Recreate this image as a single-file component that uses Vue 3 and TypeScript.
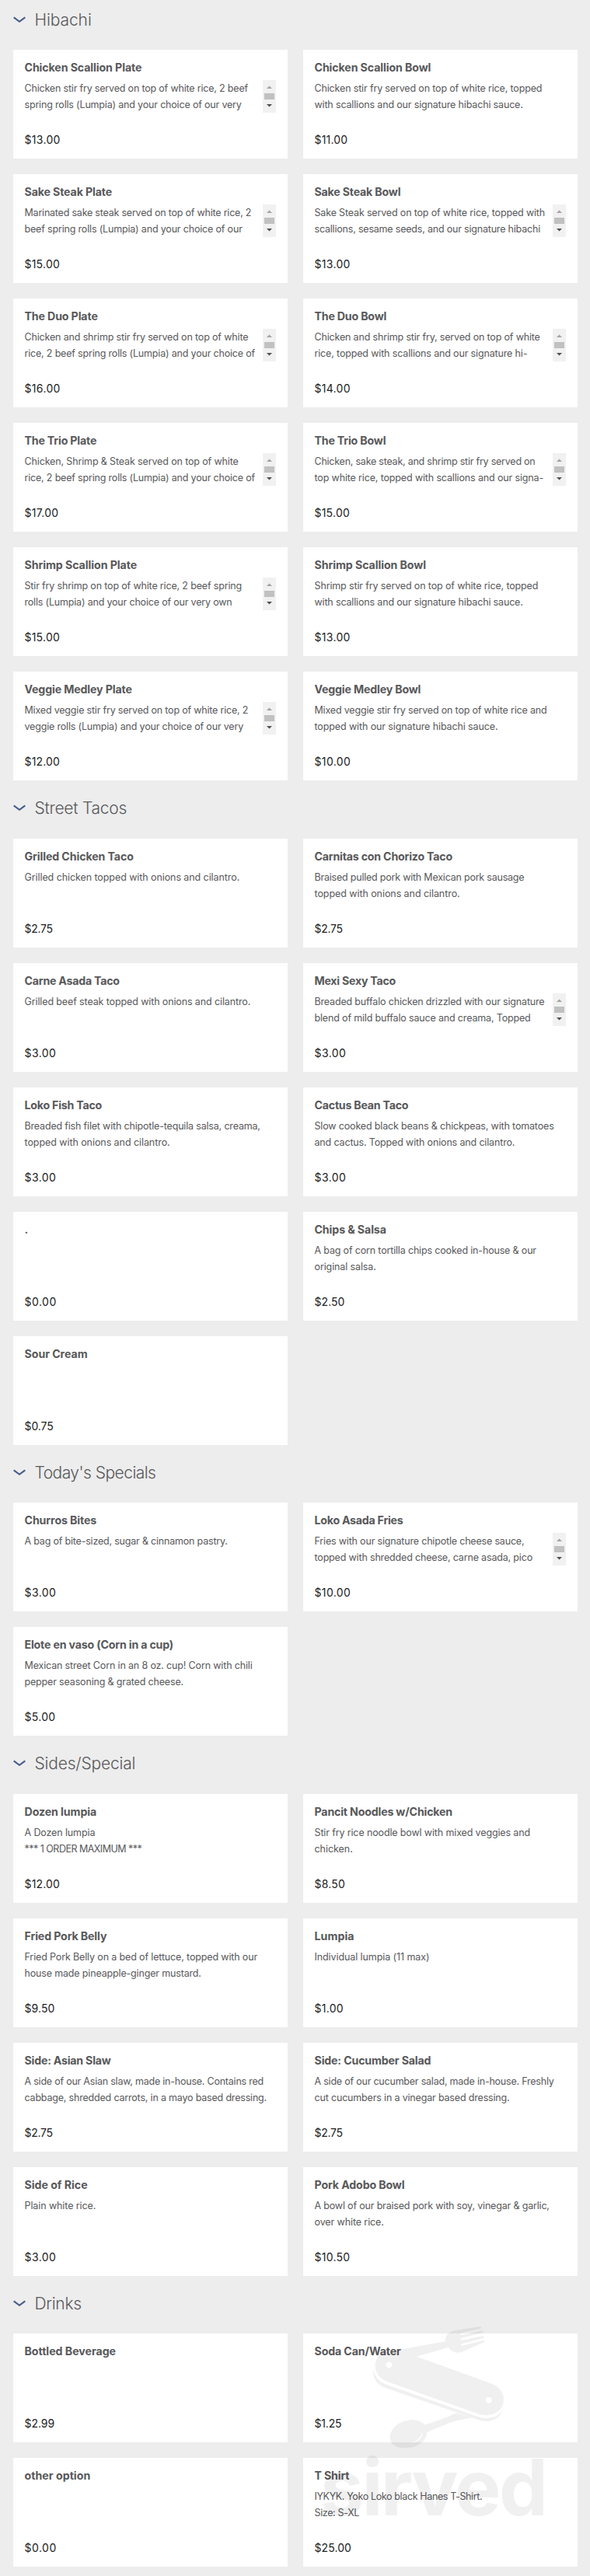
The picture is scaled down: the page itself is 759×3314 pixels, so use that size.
<script setup lang="ts">
import type { Directive } from 'vue'

// A run of text with the width, in pixels, that it is set to.
type Run = [text: string, width: number]

interface Item {
  title: Run
  price: Run
  lines: Run[]
  scroll: boolean
}
interface Section {
  name: Run
  items: Item[]
}

function item(title: Run, price: Run, lines: Run[] = [], scroll = false): Item {
  return { title, price, lines, scroll }
}

// Tracks a run in or out until it takes up its set width.
const vFit: Directive<HTMLElement, Run> = {
  mounted(el, { value: [text, width] }) {
    const apply = () => {
      el.style.letterSpacing = '0px'
      const natural = el.getBoundingClientRect().width
      el.style.letterSpacing = `${((width + 1.5 - natural) / text.length).toFixed(3)}px`
    }
    apply()
    document.fonts.ready.then(apply)
  },
}

const sections: Section[] = [
  {
    name: ['Hibachi', 71.7],
    items: [
      item(['Chicken Scallion Plate', 149.3], ['$13.00', 44.7], [['Chicken stir fry served on top of white rice, 2 beef', 286], ['spring rolls (Lumpia) and your choice of our very', 277.7]], true),
      item(['Chicken Scallion Bowl', 148.3], ['$11.00', 41.3], [['Chicken stir fry served on top of white rice, topped', 291.3], ['with scallions and our signature hibachi sauce.', 266.7]]),
      item(['Sake Steak Plate', 111], ['$15.00', 44], [['Marinated sake steak served on top of white rice, 2', 290.3], ['beef spring rolls (Lumpia) and your choice of our', 278.7]], true),
      item(['Sake Steak Bowl', 109.3], ['$13.00', 44.7], [['Sake Steak served on top of white rice, topped with', 295], ['scallions, sesame seeds, and our signature hibachi', 289]], true),
      item(['The Duo Plate', 92.7], ['$16.00', 44.8], [['Chicken and shrimp stir fry served on top of white', 286.3], ['rice, 2 beef spring rolls (Lumpia) and your choice of', 295]], true),
      item(['The Duo Bowl', 91.2], ['$14.00', 44.8], [['Chicken and shrimp stir fry, served on top of white', 288.7], ['rice, topped with scallions and our signature hi-', 272.3]], true),
      item(['The Trio Plate', 91.2], ['$17.00', 42.4], [['Chicken, Shrimp & Steak served on top of white', 273.7], ['rice, 2 beef spring rolls (Lumpia) and your choice of', 295]], true),
      item(['The Trio Bowl', 90.3], ['$15.00', 44], [['Chicken, sake steak, and shrimp stir fry served on', 282.5], ['top white rice, topped with scallions and our signa-', 293]], true),
      item(['Shrimp Scallion Plate', 143], ['$15.00', 44], [['Stir fry shrimp on top of white rice, 2 beef spring', 278], ['rolls (Lumpia) and your choice of our very own', 265.5]], true),
      item(['Shrimp Scallion Bowl', 142], ['$13.00', 44.7], [['Shrimp stir fry served on top of white rice, topped', 286.3], ['with scallions and our signature hibachi sauce.', 266.7]]),
      item(['Veggie Medley Plate', 136.7], ['$12.00', 44], [['Mixed veggie stir fry served on top of white rice, 2', 286.3], ['veggie rolls (Lumpia) and your choice of our very', 280]], true),
      item(['Veggie Medley Bowl', 135.3], ['$10.00', 45.3], [['Mixed veggie stir fry served on top of white rice and', 297.4], ['topped with our signature hibachi sauce.', 234.5]]),
    ],
  },
  {
    name: ['Street Tacos', 117],
    items: [
      item(['Grilled Chicken Taco', 138.7], ['$2.75', 34.6], [['Grilled chicken topped with onions and cilantro.', 275.2]]),
      item(['Carnitas con Chorizo Taco', 176], ['$2.75', 34.6], [['Braised pulled pork with Mexican pork sausage', 268.4], ['topped with onions and cilantro.', 185.6]]),
      item(['Carne Asada Taco', 120.8], ['$3.00', 39.3], [['Grilled beef steak topped with onions and cilantro.', 289.2]]),
      item(['Mexi Sexy Taco', 103], ['$3.00', 39.3], [['Breaded buffalo chicken drizzled with our signature', 294.5], ['blend of mild buffalo sauce and creama, Topped', 276.6]], true),
      item(['Loko Fish Taco', 98], ['$3.00', 39.3], [['Breaded fish filet with chipotle-tequila salsa, creama,', 301.8], ['topped with onions and cilantro.', 185.6]]),
      item(['Cactus Bean Taco', 119.3], ['$3.00', 39.3], [['Slow cooked black beans & chickpeas, with tomatoes', 306.6], ['and cactus. Topped with onions and cilantro.', 256.3]]),
      item(['.', 2.5], ['$0.00', 39.7]),
      item(['Chips & Salsa', 90.8], ['$2.50', 37.5], [['A bag of corn tortilla chips cooked in-house & our', 283.9], ['original salsa.', 77.7]]),
      item(['Sour Cream', 79.6], ['$0.75', 35.6]),
    ],
  },
  {
    name: ["Today's Specials", 154.4],
    items: [
      item(['Churros Bites', 91.2], ['$3.00', 39.3], [['A bag of bite-sized, sugar & cinnamon pastry.', 259.7]]),
      item(['Loko Asada Fries', 112.5], ['$10.00', 45.3], [['Fries with our signature chipotle cheese sauce,', 268.4], ['topped with shredded cheese, carne asada, pico', 279]], true),
      item(['Elote en vaso (Corn in a cup)', 190], ['$5.00', 38.5], [['Mexican street Corn in an 8 oz. cup! Corn with chili', 291.6], ['pepper seasoning & grated cheese.', 203]]),
    ],
  },
  {
    name: ['Sides/Special', 128.3],
    items: [
      item(['Dozen lumpia', 91.2], ['$12.00', 44], [['A Dozen lumpia', 89.3], ['*** 1 ORDER MAXIMUM ***', 149.3]]),
      item(['Pancit Noodles w/Chicken', 176], ['$8.50', 38], [['Stir fry rice noodle bowl with mixed veggies and', 276], ['chicken.', 47.7]]),
      item(['Fried Pork Belly', 104.3], ['$9.50', 37.5], [['Fried Pork Belly on a bed of lettuce, topped with our', 298], ['house made pineapple-ginger mustard.', 225.8]]),
      item(['Lumpia', 49.6], ['$1.00', 36], [['Individual lumpia (11 max)', 146.4]]),
      item(['Side: Asian Slaw', 109.6], ['$2.75', 34.6], [['A side of our Asian slaw, made in-house. Contains red', 306], ['cabbage, shredded carrots, in a mayo based dressing.', 310]]),
      item(['Side: Cucumber Salad', 148.4], ['$2.75', 34.6], [['A side of our cucumber salad, made in-house. Freshly', 306.6], ['cut cucumbers in a vinegar based dressing.', 249.5]]),
      item(['Side of Rice', 79.6], ['$3.00', 39.3], [['Plain white rice.', 90.3]]),
      item(['Pork Adobo Bowl', 114.5], ['$10.50', 44.3], [['A bowl of our braised pork with soy, vinegar & garlic,', 300.8], ['over white rice.', 87.8]]),
    ],
  },
  {
    name: ['Drinks', 58.7],
    items: [
      item(['Bottled Beverage', 116], ['$2.99', 37]),
      item(['Soda Can/Water', 109.7], ['$1.25', 33.3]),
      item(['other option', 83.3], ['$0.00', 39.7]),
      item(['T Shirt', 43.3], ['$25.00', 46], [['IYKYK. Yoko Loko black Hanes T-Shirt.', 214.3], ['Size: S-XL', 56]]),
    ],
  },
]
</script>

<template>
  <main class="menu">
    <section v-for="s in sections" :key="s.name[0]" class="section">
      <h2 class="heading">
        <svg class="chevron" width="16" height="10" viewBox="0 0 16 10">
          <path d="M0.7 1.4 L8 6.8 L15.3 1.4" fill="none" stroke="#465a8c" stroke-width="2.1" />
        </svg>
        <span v-fit="s.name">{{ s.name[0] }}</span>
      </h2>
      <div class="grid">
        <article v-for="(it, i) in s.items" :key="i" class="card">
          <h3 class="title"><span v-fit="it.title">{{ it.title[0] }}</span></h3>
          <div class="desc">
            <div class="copy">
              <p v-for="(l, j) in it.lines" :key="j" class="line"><span v-fit="l">{{ l[0] }}</span></p>
            </div>
            <svg v-if="it.scroll" class="bar" width="17" height="42" viewBox="0 0 17 42">
              <rect width="17" height="42" fill="#f1f1f1" />
              <path d="M5 11 L8.5 7.5 L12 11 Z" fill="#a3a3a3" />
              <rect x="2" y="17" width="13" height="8" fill="#c1c1c1" />
              <path d="M5 31 L12 31 L8.5 34.5 Z" fill="#505050" />
            </svg>
          </div>
          <div class="price"><span v-fit="it.price">{{ it.price[0] }}</span></div>
        </article>
      </div>
    </section>

    <svg class="watermark" width="310" height="265" viewBox="405 2985 310 265">
      <g transform="translate(470 2985) scale(0.33333)">
        <!-- handle with the fork's stem -->
        <path
          fill-rule="evenodd"
          d="M60 128 C80 114 110 120 140 112 L308 82 L320 104 L198 140 L490 246 C528 262 540 296 531 325 C520 358 480 375 440 362 L82 236 C33 216 24 160 60 128 Z M91 160 a12 12 0 1 0 0.1 0 Z M476 296 a12 12 0 1 0 0.1 0 Z"
        />
        <!-- lower edge of the handle -->
        <path d="M32 190 C36 222 55 238 78 247 L440 374 C480 384 510 374 529 348 C516 385 480 395 445 387 L72 259 C40 244 27 220 32 190 Z" />
        <!-- fork -->
        <path
          d="M308 84 C308 58 322 44 345 40 L442 24 C449 25 449 30 444 32 L370 49 C365 52 367 58 373 57 L450 40 C456 41 456 46 452 48 L370 69 C365 72 367 78 373 77 L453 61 C459 62 459 67 455 69 L372 91 C367 94 369 100 375 98 L456 77 C461 78 461 83 458 85 L385 117 C365 128 338 130 320 104 Z"
        />
        <!-- spoon -->
        <path d="M352 358 L412 376 C370 384 340 388 310 402 L238 432 L224 404 C270 394 310 376 352 358 Z" />
        <path
          fill-rule="evenodd"
          d="M96 460 C90 420 128 388 180 384 C212 384 238 402 238 430 C238 466 200 492 158 493 C124 494 100 484 96 460 Z M218 430 C218 452 198 468 174 474 C204 472 226 452 218 430 Z"
        />
      </g>
      <text x="412" y="3236" textLength="293" lengthAdjust="spacing">sirved</text>
    </svg>
  </main>
</template>

<style>
html,
body {
  margin: 0;
  background: #ededed;
}
</style>

<style scoped>
.menu {
  position: relative;
  box-sizing: border-box;
  width: 759px;
  height: 3314px;
  padding: 0 16px 0 17px;
  overflow: hidden;
  background: #ededed;
  font-family: Inter, 'Liberation Sans', sans-serif;
  color: #58585a;
}
.heading {
  display: flex;
  align-items: center;
  box-sizing: border-box;
  height: 74.5px;
  margin: 0;
  padding-bottom: 2px;
  gap: 11.5px;
  font-size: 21px;
  font-weight: 350;
  line-height: 30px;
  white-space: nowrap;
}
.section:first-child .heading {
  height: 64px;
  padding-bottom: 12.5px;
}
.grid {
  display: grid;
  grid-template-columns: 353px 353px;
  gap: 20px;
}
.card {
  box-sizing: border-box;
  height: 140px;
  padding: 13px 15px 0 14.5px;
  background: #fff;
}
.title {
  height: 26px;
  margin: 0;
  font-size: 14.2px;
  font-weight: 650;
  line-height: 20px;
  white-space: nowrap;
}
.desc {
  display: flex;
  justify-content: space-between;
  height: 42px;
}
.line {
  margin: 0;
  font-size: 12.5px;
  line-height: 21px;
  white-space: nowrap;
}
.bar {
  flex: none;
}
.price {
  margin-top: 25px;
  font-size: 14px;
  line-height: 20px;
  color: #222;
}
.watermark {
  position: absolute;
  left: 405px;
  top: 2985px;
  opacity: 0.055;
  pointer-events: none;
}
.watermark text {
  font: 700 100px Inter, sans-serif;
}
</style>
